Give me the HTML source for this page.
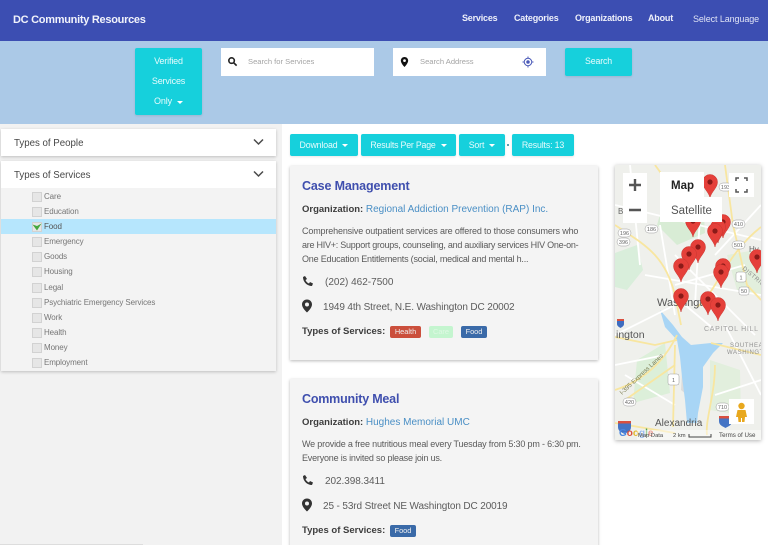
<!DOCTYPE html>
<html lang="en"><head><meta charset="utf-8"><title>DC Community Resources</title>
<style>
html,body{margin:0;padding:0;width:768px;height:545px;overflow:hidden;background:#fff}
body{font-family:"Liberation Sans",sans-serif;color:#444}
#w{position:relative;width:768px;height:545px;overflow:hidden;filter:blur(.3px)}
.a{position:absolute;white-space:nowrap}
.b{position:absolute;background:#16d0dc;border-radius:2px;color:#e8fbfc;font-size:9px;letter-spacing:-.15px;display:flex;align-items:center;justify-content:center;box-shadow:0 1px 2px rgba(0,0,0,.1);white-space:nowrap}
.caret{display:inline-block;border-left:3px solid transparent;border-right:3px solid transparent;border-top:3px solid #fff;margin-left:5px}
.nav{position:absolute;color:#eef0fa;font-size:9px;letter-spacing:-.2px;font-weight:bold;top:13px;line-height:11px;white-space:nowrap}
.card{position:absolute;left:290px;width:308px;background:#f4f4f4;box-shadow:0 1px 3px rgba(0,0,0,.28)}
.h{color:#3f4fae;font-size:12.5px;letter-spacing:-.15px;font-weight:bold}
.org{font-size:9.5px;font-weight:bold;color:#3d3d3d}
.org span{color:#4a8fc5;font-weight:normal;font-size:10px}
.desc{font-size:9px;color:#5a5a5a}
.info{font-size:10px;letter-spacing:-.12px;color:#5c5c5c}
.tag{position:absolute;height:12px;line-height:12px;font-size:7.4px;color:#f0f0f0;border-radius:2px;text-align:center}
.li{position:absolute;left:44px;font-size:8px;letter-spacing:-.1px;color:#767676;white-space:nowrap;line-height:10px;margin-top:1px}
.cb{position:absolute;left:32px;width:8px;height:8px;background:#e6e6e6;border:.5px solid #d2d2d2}
.s text{font-size:5.500px;fill:#666;text-anchor:middle}
</style></head><body><div id="w">

<div class="a" style="left:0;top:0;width:768px;height:41px;background:#3c4eb2"></div>
<div class="a" style="left:13px;top:13px;color:#f1f3fb;font-size:11px;letter-spacing:-.28px;font-weight:bold;line-height:14px">DC Community Resources</div>
<div class="nav" style="left:462px">Services</div>
<div class="nav" style="left:514px">Categories</div>
<div class="nav" style="left:575px">Organizations</div>
<div class="nav" style="left:648px">About</div>
<div class="a" style="left:693px;top:14px;color:#dfe3f5;font-size:9px;letter-spacing:-.1px;line-height:11px">Select Language</div>

<div class="a" style="left:0;top:41px;width:768px;height:83px;background:#abc9e7"></div>
<div class="b" style="left:135px;top:48px;width:67px;height:65px;padding-bottom:2px;flex-direction:column;line-height:20px"><div>Verified</div><div>Services</div><div>Only<span class="caret"></span></div></div>

<div class="a" style="left:221px;top:48px;width:153px;height:28px;background:#fff"></div>
<svg class="a" style="left:227px;top:56px" width="11" height="11" viewBox="0 0 24 24"><circle cx="10" cy="10" r="6" fill="none" stroke="#222" stroke-width="3.5"/><path d="M14.500 14.500L21 21" stroke="#222" stroke-width="3.5"/></svg>
<div class="a" style="left:248px;top:57px;font-size:7.6px;line-height:10px;color:#a4a4a4">Search for Services</div>

<div class="a" style="left:393px;top:48px;width:153px;height:28px;background:#fff"></div>
<svg class="a" style="left:399px;top:56px" width="11" height="12" viewBox="0 0 24 24"><path fill-rule="evenodd" d="M12 1C7 1 4 5 4 9c0 6 8 14 8 14s8-8 8-14c0-4-3-8-8-8zm0 11a3 3 0 1 1 0-6 3 3 0 0 1 0 6z" fill="#111"/></svg>
<div class="a" style="left:420px;top:57px;font-size:7.6px;line-height:10px;color:#a4a4a4">Search Address</div>
<svg class="a" style="left:522px;top:56px" width="12" height="12" viewBox="0 0 24 24"><circle cx="12" cy="12" r="7.500" fill="none" stroke="#4a59b8" stroke-width="2"/><circle cx="12" cy="12" r="3.500" fill="#4a59b8"/><path d="M12 1v4M12 19v4M1 12h4M19 12h4" stroke="#4a59b8" stroke-width="2"/></svg>
<div class="b" style="left:565px;top:48px;width:67px;height:26px;padding-bottom:2px;font-size:8.8px">Search</div>

<!-- left column -->
<div class="a" style="left:0;top:124px;width:282px;height:421px;background:#f2f2f2"></div>
<div class="a" style="left:1px;top:129px;width:275px;height:27px;background:#fff;box-shadow:0 1px 3px rgba(0,0,0,.22)"></div>
<div class="a" style="left:14px;top:137px;font-size:9.7px;color:#474747;line-height:13px">Types of People</div>
<svg class="a" style="left:253px;top:138px" width="11" height="8" viewBox="0 0 11 8"><path d="M1 1.500l4.500 4.500L10 1.500" fill="none" stroke="#4a4a4a" stroke-width="1.5"/></svg>

<div class="a" style="left:1px;top:161px;width:275px;height:210px;background:#f3f3f3;box-shadow:0 1px 3px rgba(0,0,0,.22)"></div>
<div class="a" style="left:1px;top:161px;width:275px;height:27px;background:#fff"></div>
<div class="a" style="left:14px;top:169px;font-size:9.7px;color:#474747;line-height:13px">Types of Services</div>
<svg class="a" style="left:253px;top:170px" width="11" height="8" viewBox="0 0 11 8"><path d="M1 1.500l4.500 4.500L10 1.500" fill="none" stroke="#4a4a4a" stroke-width="1.5"/></svg>
<div class="a" style="left:1px;top:219px;width:275px;height:15px;background:#b6e6fd"></div>

<div class="cb" style="top:192px"></div><div class="li" style="top:191px">Care</div>
<div class="cb" style="top:207px"></div><div class="li" style="top:206px">Education</div>
<div class="cb" style="top:222px"></div><svg class="a" style="left:32px;top:221px" width="10" height="10" viewBox="0 0 10 10"><path d="M.5 3.500L5 9.500l4.500-7L5 5z" fill="#45a83e"/></svg><div class="li" style="top:221px;color:#555">Food</div>
<div class="cb" style="top:237px"></div><div class="li" style="top:236px">Emergency</div>
<div class="cb" style="top:252px"></div><div class="li" style="top:251px">Goods</div>
<div class="cb" style="top:267px"></div><div class="li" style="top:266px">Housing</div>
<div class="cb" style="top:283px"></div><div class="li" style="top:282px">Legal</div>
<div class="cb" style="top:298px"></div><div class="li" style="top:297px">Psychiatric Emergency Services</div>
<div class="cb" style="top:313px"></div><div class="li" style="top:312px">Work</div>
<div class="cb" style="top:328px"></div><div class="li" style="top:327px">Health</div>
<div class="cb" style="top:343px"></div><div class="li" style="top:342px">Money</div>
<div class="cb" style="top:358px"></div><div class="li" style="top:357px">Employment</div>

<!-- toolbar -->
<div class="b" style="left:290px;top:134px;width:68px;height:22px;font-size:8.8px">Download<span class="caret"></span></div>
<div class="b" style="left:361px;top:134px;width:95px;height:22px;font-size:8.8px;letter-spacing:-.2px">Results Per Page<span class="caret"></span></div>
<div class="b" style="left:459px;top:134px;width:46px;height:22px;font-size:8.8px">Sort<span class="caret"></span></div>
<div class="a" style="left:507px;top:144px;width:2px;height:2px;background:#5fa0b0"></div>
<div class="b" style="left:512px;top:134px;width:62px;height:22px;font-size:8.8px">Results: 13</div>

<!-- card 1 -->
<div class="card" style="top:166px;height:194px"></div>
<div class="a h" style="left:302px;top:179px;line-height:15px">Case Management</div>
<div class="a org" style="left:302px;top:203px;line-height:13px">Organization: <span>Regional Addiction Prevention (RAP) Inc.</span></div>
<div class="a desc" style="left:302px;top:225px;line-height:12px;letter-spacing:-.15px">Comprehensive outpatient services are offered to those consumers who</div>
<div class="a desc" style="left:302px;top:239px;line-height:12px;letter-spacing:-.25px">are HIV+: Support groups, counseling, and auxiliary services HIV One-on-</div>
<div class="a desc" style="left:302px;top:253px;line-height:12px;letter-spacing:-.2px">One Education Entitlements (social, medical and mental h...</div>
<svg class="a" style="left:302px;top:275px" width="12" height="12" viewBox="0 0 24 24"><path d="M6 2L2 4C2 14 10 22 20 22L22 17 16 14 14 17C11 16 8 13 7 10L10 8z" fill="#333"/></svg>
<div class="a info" style="left:325px;top:276px;line-height:13px;letter-spacing:0">(202) 462-7500</div>
<svg class="a" style="left:301px;top:299px" width="12" height="14" viewBox="0 0 24 28"><path fill-rule="evenodd" d="M12 1C6 1 2 5.500 2 11c0 7 10 16 10 16s10-9 10-16C22 5.500 18 1 12 1zm0 14a4 4 0 1 1 0-8 4 4 0 0 1 0 8z" fill="#333"/></svg>
<div class="a info" style="left:323px;top:301px;line-height:13px">1949 4th Street, N.E. Washington DC 20002</div>
<div class="a org" style="left:302px;top:325px;line-height:13px">Types of Services:</div>
<div class="tag" style="left:390px;top:326px;width:31px;background:#cb4f3c">Health</div>
<div class="tag" style="left:429px;top:326px;width:24px;background:#c4f5cf;color:#dff8e4">Care</div>
<div class="tag" style="left:461px;top:326px;width:26px;background:#3a6aa8">Food</div>

<!-- card 2 -->
<div class="card" style="top:379px;height:170px"></div>
<div class="a h" style="left:302px;top:392px;line-height:15px;letter-spacing:-.2px">Community Meal</div>
<div class="a org" style="left:302px;top:416px;line-height:13px">Organization: <span>Hughes Memorial UMC</span></div>
<div class="a desc" style="left:302px;top:438px;line-height:12px;letter-spacing:-.18px">We provide a free nutritious meal every Tuesday from 5:30 pm - 6:30 pm.</div>
<div class="a desc" style="left:302px;top:452px;line-height:12px;letter-spacing:-.2px">Everyone is invited so please join us.</div>
<svg class="a" style="left:302px;top:474px" width="12" height="12" viewBox="0 0 24 24"><path d="M6 2L2 4C2 14 10 22 20 22L22 17 16 14 14 17C11 16 8 13 7 10L10 8z" fill="#333"/></svg>
<div class="a info" style="left:325px;top:475px;line-height:13px;letter-spacing:-.05px">202.398.3411</div>
<svg class="a" style="left:301px;top:498px" width="12" height="14" viewBox="0 0 24 28"><path fill-rule="evenodd" d="M12 1C6 1 2 5.500 2 11c0 7 10 16 10 16s10-9 10-16C22 5.500 18 1 12 1zm0 14a4 4 0 1 1 0-8 4 4 0 0 1 0 8z" fill="#333"/></svg>
<div class="a info" style="left:323px;top:500px;line-height:13px">25 - 53rd Street NE Washington DC 20019</div>
<div class="a org" style="left:302px;top:524px;line-height:13px">Types of Services:</div>
<div class="tag" style="left:390px;top:525px;width:26px;background:#3a6aa8">Food</div>

<div class="a" style="left:0;top:544px;width:143px;height:1px;background:#ddd"></div>

<!-- map -->
<svg class="a" style="left:615px;top:165px;box-shadow:0 1px 4px rgba(0,0,0,.3)" width="146" height="275" viewBox="0 0 146 275" font-family="Liberation Sans, sans-serif">
<defs><clipPath id="mc"><rect width="146" height="275"/></clipPath>
<g id="pin"><path d="M0 0C-1 -6 -7.500 -10 -7.500 -16A7.500 7.500 0 0 1 7.500 -16C7.500 -10 1 -6 0 0z" fill="#e5403a" stroke="#c93530" stroke-width=".5"/><circle cx="0" cy="-16" r="2.600" fill="#8a1a18"/></g></defs>
<g clip-path="url(#mc)">
<rect width="146" height="275" fill="#eff0ec"/>
<path d="M50 32L88 34 90 68 62 80 42 60z" fill="#d8ecd5"/>
<path d="M0 88L22 80 28 105 12 125 0 122z" fill="#d9eedb"/>
<path d="M112 90L146 84 146 130 122 125z" fill="#e2efdd"/>
<path d="M22 195L50 178 55 228 18 238z" fill="#dcefd9"/>
<path d="M95 195L125 205 126 250 95 245z" fill="#e2efdd"/>
<path d="M68 190L80 205 78 235 66 225z" fill="#dcdcdc"/>
<path d="M45 145L58 160 67 172 76 180 96 178 108 178 98 188 88 202 88 222 83 248 82 258 72 258 70 235 67 212 65 192 62 175 50 162z" fill="#a8d5f5"/>
<g fill="none" stroke="#fff" stroke-width="1.800">
<path d="M0 40L146 75"/><path d="M45 60L60 150"/><path d="M85 50L80 140"/><path d="M30 110L146 130"/><path d="M60 90L140 170"/><path d="M0 170L60 140"/><path d="M10 210L60 240"/><path d="M110 160L146 230"/><path d="M100 90L146 40"/><path d="M15 0L25 100"/><path d="M60 120L130 100"/><path d="M0 200L50 190"/><path d="M100 230L146 215"/><path d="M70 140L100 165"/></g>
<g fill="none" stroke="#f8e6a0" stroke-width="1.800">
<path d="M0 60C30 80 50 90 60 130L66 160"/><path d="M146 62C110 90 100 130 82 142"/><path d="M40 0L80 55"/><path d="M110 0L118 60 132 120 146 135"/><path d="M0 172L40 180 62 175"/><path d="M96 178L146 190"/><path d="M0 225C30 215 50 195 62 170"/><path d="M60 180L58 262"/><path d="M100 200C100 230 90 255 92 270"/><path d="M0 258L60 268"/><path d="M10 235L60 200"/></g>
<g class="s">
<g fill="#fff" stroke="#999" stroke-width=".5"><rect x="30" y="60" width="13" height="8" rx="4"/><rect x="3" y="64" width="13" height="8" rx="4"/><rect x="2" y="73" width="13" height="8" rx="4"/><rect x="117" y="55" width="13" height="8" rx="4"/><rect x="117" y="76" width="13" height="8" rx="4"/><rect x="104" y="18" width="13" height="8" rx="4"/><rect x="124" y="122" width="10" height="8" rx="2"/><rect x="121" y="107" width="10" height="10" rx="2"/><rect x="53" y="209" width="11" height="11" rx="2"/><rect x="8" y="233" width="13" height="8" rx="4"/><rect x="101" y="238" width="13" height="8" rx="4"/></g>
<text x="36.500" y="66">186</text><text x="9.500" y="70">196</text><text x="8.500" y="79">396</text><text x="123.500" y="61">410</text><text x="123.500" y="82">501</text><text x="110.500" y="24">193</text><text x="129" y="128">50</text><text x="126" y="114.500">1</text><text x="58.500" y="217">1</text><text x="14.500" y="239">420</text><text x="107.500" y="244">710</text>
</g>
<text x="3" y="49" font-size="8" fill="#666">B</text>
<text x="134" y="87" font-size="8" fill="#666">Hy</text>
<text x="127" y="104" font-size="6" fill="#888" letter-spacing=".5" transform="rotate(40 127 104)">DISTRICT</text>
<text x="42" y="141" font-size="11" fill="#555">Washington</text>
<text x="1" y="173" font-size="10.500" fill="#555">ington</text>
<text x="89" y="166" font-size="7" fill="#a0a0a0" letter-spacing=".7">CAPITOL HILL</text>
<text x="115" y="182" font-size="6" fill="#909090" letter-spacing=".6">SOUTHEAST</text>
<text x="112" y="189" font-size="6" fill="#909090" letter-spacing=".6">WASHINGTON</text>
<text x="40" y="261" font-size="10" fill="#555">Alexandria</text>
<text x="7" y="230" font-size="6.200" fill="#7c7c50" transform="rotate(-43 7 230)">I-395 Express Lanes</text>
<path d="M2 154h7v5c0 2-2 3-3.500 4C4 162 2 161 2 159z" fill="#3f6dc0"/><rect x="2" y="154" width="7" height="2" fill="#d9503f"/>
<path d="M3 256h13v6c0 4-3 5-6.500 7C6 267 3 266 3 262z" fill="#4474c4"/><rect x="3" y="256" width="13" height="2.500" fill="#d9503f"/>
<path d="M104 251h13v5c0 4-3 5-6.500 7C107 261 104 260 104 256z" fill="#4474c4"/><rect x="104" y="251" width="13" height="2.500" fill="#d9503f"/>
<text x="4" y="271" font-size="10" font-weight="bold" fill="#4a86e0">G<tspan fill="#d9503f">o</tspan><tspan fill="#e5b92f">o</tspan><tspan fill="#4a86e0">g</tspan><tspan fill="#4fa04e">l</tspan><tspan fill="#d9503f">e</tspan></text>
<rect x="22" y="265" width="124" height="10" fill="#fff" opacity=".45"/>
<text x="23" y="272" font-size="5.800" fill="#444">Map Data</text>
<text x="58" y="272" font-size="5.800" fill="#444">2 km</text>
<path d="M74 269v3h22v-3" fill="none" stroke="#444" stroke-width="1"/>
<text x="104" y="272" font-size="6.200" fill="#444">Terms of Use</text>
<use href="#pin" x="95" y="33"/>
<use href="#pin" x="78" y="72"/>
<use href="#pin" x="108" y="73"/><use href="#pin" x="103" y="78"/><use href="#pin" x="100" y="82"/>
<use href="#pin" x="83" y="98"/><use href="#pin" x="74" y="105"/><use href="#pin" x="66" y="117"/>
<use href="#pin" x="142" y="108"/>
<use href="#pin" x="108" y="117"/><use href="#pin" x="106" y="123"/>
<use href="#pin" x="66" y="147"/><use href="#pin" x="93" y="150"/><use href="#pin" x="103" y="156"/>
<rect x="8" y="8" width="24" height="25" fill="#fff"/>
<rect x="8" y="33" width="24" height="25" fill="#fff"/>
<path d="M14 20h12M20 14v12M14 45h12" stroke="#555" stroke-width="2.400" fill="none"/>
<rect x="45" y="7" width="44" height="25" fill="#fff"/>
<rect x="45" y="32" width="62" height="25" fill="#fff"/>
<text x="56" y="24" font-size="11.500" font-weight="bold" fill="#222">Map</text>
<text x="56" y="49" font-size="11.500" fill="#555">Satellite</text>
<rect x="114" y="8" width="25" height="24" fill="#fff"/>
<path d="M121 16v-3h3M129 13h3v3M132 24v3h-3M124 27h-3v-3" fill="none" stroke="#555" stroke-width="1.500"/>
<rect x="114" y="234" width="25" height="25" fill="#fff"/>
<circle cx="126.500" cy="241" r="3.200" fill="#e8a81e"/>
<path d="M122.500 245h8l1.500 7h-2l-.5 5h-2.500v-4h-1v4h-2.500l-.5-5h-2z" fill="#e8a81e"/>
</g></svg>
</div></body></html>
